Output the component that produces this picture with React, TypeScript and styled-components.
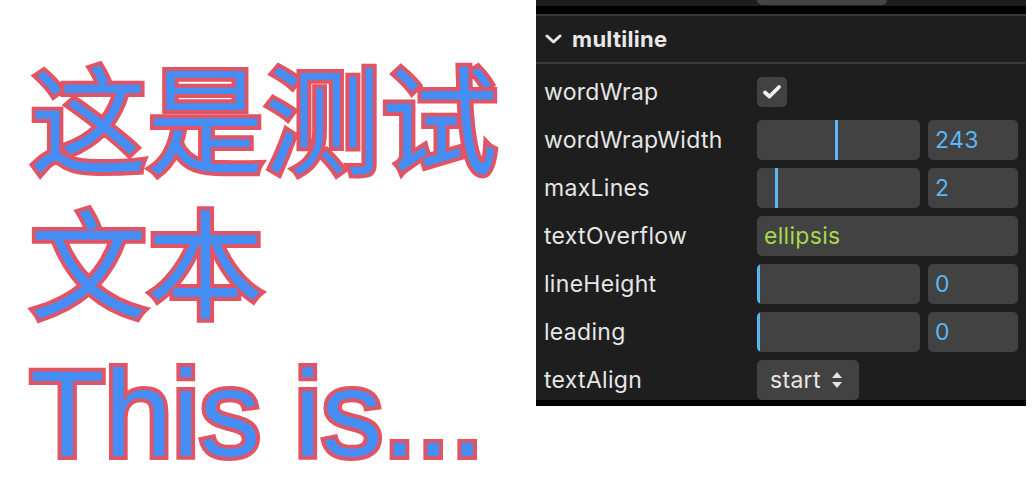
import styled, { createGlobalStyle } from "styled-components";

const Global = createGlobalStyle`
  html, body {
    margin: 0;
    padding: 0;
    background: #ffffff;
  }
  body {
    width: 1036px;
    height: 486px;
    overflow: hidden;
  }
`;

const Page = styled.div`
  display: flex;
  align-items: flex-start;
  width: 1036px;
  height: 486px;
`;

const Stage = styled.div`
  width: 536px;
  padding: 42px 0 0 30px;
  box-sizing: border-box;
`;

const StrokeLine = styled.div<{ latin?: boolean }>`
  font-family: ${(p) =>
    p.latin
      ? '"Liberation Sans", Arial, sans-serif'
      : '"Noto Sans CJK SC", "Noto Sans", sans-serif'};
  font-size: ${(p) => (p.latin ? "122px" : "117px")};
  line-height: ${(p) => (p.latin ? "140px" : "144px")};
  margin-top: ${(p) => (p.latin ? "14px" : "0")};
  font-weight: 400;
  color: #448ef6;
  -webkit-text-stroke: 8px #e05566;
  paint-order: stroke fill;
  white-space: nowrap;
`;

const Pane = styled.div`
  width: 490px;
  background: #1e1e1e;
  font-family: Inter, "Noto Sans", sans-serif;
  color: #e6e6e6;
  border-bottom: 6px solid #000;
`;

const TopStub = styled.div`
  height: 6px;
  padding-left: 221px;
  border-bottom: 8px solid #000;
`;

const StubButton = styled.div`
  width: 130px;
  height: 5px;
  background: #444;
  border-radius: 0 0 6px 6px;
`;

const FolderHead = styled.div`
  display: flex;
  align-items: center;
  gap: 10px;
  height: 46px;
  padding-left: 9px;
  border-top: 2px solid #3a3a3a;
  border-bottom: 2px solid #3a3a3a;
  font-size: 22px;
  font-weight: 700;
  letter-spacing: 0.3px;
  color: #e8e8e8;
`;

const Rows = styled.div`
  display: flex;
  flex-direction: column;
  gap: 8px;
  padding: 8px 8px 0 8px;
`;

const Row = styled.div`
  display: grid;
  grid-template-columns: 213px 1fr;
  align-items: center;
  height: 40px;
`;

const Label = styled.div`
  font-size: 23px;
  letter-spacing: 0.3px;
  color: #e6e6e6;
`;

const Controls = styled.div<{ center?: boolean }>`
  display: flex;
  align-items: ${(p) => (p.center ? "center" : "stretch")};
  gap: 8px;
  height: 40px;
`;

const Box = styled.div`
  background: #424242;
  border-radius: 5px;
  height: 40px;
`;

const Slider = styled(Box)`
  position: relative;
  width: 163px;
  overflow: hidden;
`;

const Knob = styled.div`
  position: absolute;
  top: 0;
  bottom: 0;
  width: 3px;
  background: #5ab8f2;
`;

const NumBox = styled(Box)`
  flex: 1;
  display: flex;
  align-items: center;
  padding-left: 7px;
  font-size: 23px;
  letter-spacing: 0.3px;
  color: #5ab8f2;
`;

const TextBox = styled(NumBox)`
  color: #a8d94c;
`;

const Check = styled(Box)`
  width: 30px;
  height: 30px;
  display: flex;
  align-items: center;
  justify-content: center;
`;

const Select = styled(Box)`
  display: flex;
  align-items: center;
  gap: 10px;
  padding: 0 16px 0 13px;
  font-size: 23px;
  letter-spacing: 0.3px;
  color: #e6e6e6;
`;

const Filler = styled.div`
  width: 10px;
`;

function SliderRow({ label, value, pos }: { label: string; value: string; pos: number }) {
  return (
    <Row>
      <Label>{label}</Label>
      <Controls>
        <Slider>
          <Knob style={{ left: pos }} />
        </Slider>
        <NumBox>{value}</NumBox>
      </Controls>
    </Row>
  );
}

export default function App() {
  return (
    <>
      <Global />
      <Page>
        <Stage>
          <StrokeLine>这是测试</StrokeLine>
          <StrokeLine>文本</StrokeLine>
          <StrokeLine latin>This is...</StrokeLine>
        </Stage>
        <Pane>
          <TopStub>
            <StubButton />
          </TopStub>
          <FolderHead>
            <svg width="17" height="10" viewBox="0 0 17 10">
              <polyline
                points="2,2 8.5,8 15,2"
                fill="none"
                stroke="#e8e8e8"
                strokeWidth="3"
                strokeLinecap="round"
                strokeLinejoin="round"
              />
            </svg>
            multiline
          </FolderHead>
          <Rows>
            <Row>
              <Label>wordWrap</Label>
              <Controls center>
                <Check>
                  <svg width="20" height="16" viewBox="0 0 20 16">
                    <polyline
                      points="3,8.5 7.5,12.5 17,3"
                      fill="none"
                      stroke="#f2f2f2"
                      strokeWidth="3.8"
                      strokeLinecap="round"
                      strokeLinejoin="round"
                    />
                  </svg>
                </Check>
              </Controls>
            </Row>
            <SliderRow label="wordWrapWidth" value="243" pos={78} />
            <SliderRow label="maxLines" value="2" pos={18} />
            <Row>
              <Label>textOverflow</Label>
              <Controls>
                <TextBox>ellipsis</TextBox>
              </Controls>
            </Row>
            <SliderRow label="lineHeight" value="0" pos={0} />
            <SliderRow label="leading" value="0" pos={0} />
            <Row>
              <Label>textAlign</Label>
              <Controls>
                <Select>
                  start
                  <svg width="12" height="18" viewBox="0 0 12 18">
                    <path d="M6 1 L11 7 H1 Z" fill="#e6e6e6" />
                    <path d="M6 17 L11 11 H1 Z" fill="#e6e6e6" />
                  </svg>
                </Select>
              </Controls>
            </Row>
          </Rows>
        </Pane>
        <Filler />
      </Page>
    </>
  );
}
